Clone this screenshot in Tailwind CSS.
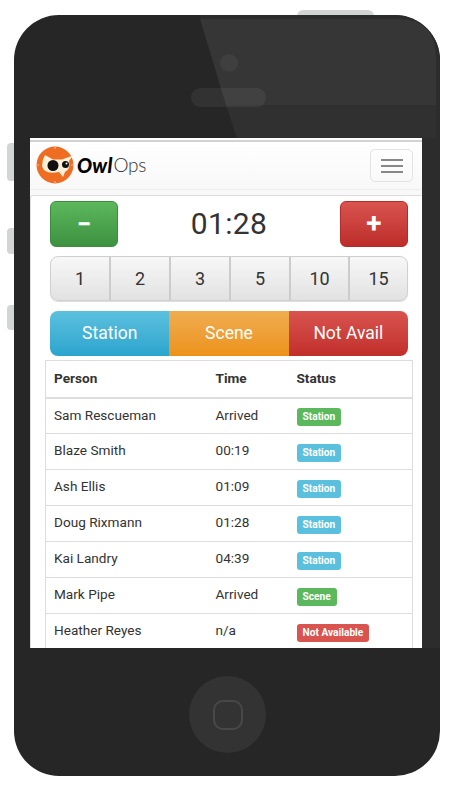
<!DOCTYPE html>
<html lang="en">
<head>
    <meta charset="UTF-8">
    <meta name="viewport" content="width=device-width, initial-scale=1.0">
    <title>OwlOps</title>
    <script src="https://cdn.jsdelivr.net/npm/@tailwindcss/browser@4"></script>
</head>
<body class="bg-white font-['Roboto',sans-serif] text-[#333]">
    <div class="relative w-[450px] h-[785px] overflow-hidden pt-[15px] pl-[14px]">
        <!-- hardware buttons -->
        <div class="absolute left-[297px] top-[10px] w-[77px] h-[6px] rounded-t-[6px] bg-[#d3d5d4]"></div>
        <div class="absolute left-[7px] top-[143px] w-[8px] h-[38px] rounded-l-[4px] bg-[#d3d5d4]"></div>
        <div class="absolute left-[7px] top-[228px] w-[8px] h-[26px] rounded-l-[4px] bg-[#d3d5d4]"></div>
        <div class="absolute left-[7px] top-[305px] w-[8px] h-[25px] rounded-l-[4px] bg-[#d3d5d4]"></div>

        <!-- phone body -->
        <div class="relative w-[426px] h-[761px] rounded-[45px] bg-[#262626] overflow-hidden pt-[123px] pl-[16px]">
            <svg class="absolute left-0 top-0" width="426" height="633" viewBox="0 0 426 633">
                <path d="M186 0H381Q426 0 426 45V633H408V123H223Z" fill="#2c2c2c"/>
                <path d="M186 4H385Q422 4 422 44V90H212Z" fill="#363636"/>
                <path d="M212 90H422V123H223Z" fill="#303030"/>
            </svg>
            <div class="absolute left-[206px] top-[39px] w-[18px] h-[18px] rounded-full bg-[#3f3f3f]"></div>
            <div class="absolute left-[177px] top-[73px] w-[75px] h-[19px] rounded-full bg-white/[0.06]"></div>

            <!-- screen -->
            <div class="relative w-[392px] h-[510px] bg-white overflow-hidden">
                <div class="pt-[2px]">
                    <nav class="h-[50px] border-t-2 border-[#d2d2d2] border-b border-b-[#eeeeee] bg-gradient-to-b from-white to-[#f8f8f8] flex items-center justify-between pl-[6px] pr-[9px]">
                        <div class="flex items-center">
                            <svg width="38" height="38" viewBox="0 0 38 38" class="mt-[-1px]">
                                <circle cx="19" cy="19" r="18.5" fill="#ee6d22"/>
                                <path d="M19 0v3M19 35v3M0 19h3M35 19h3" stroke="#f9b184" stroke-width="1.2"/>
                                <path d="M9 9L17 13.500H26L37 9.500L33 15Q35 23 29 26L27 31L23 26Q8 29 6 20Q6 14 9 9Z" fill="#fdf0d8"/>
                                <circle cx="17" cy="19.500" r="5.500" fill="#111"/>
                                <circle cx="29.500" cy="18.500" r="3.500" fill="#111"/>
                                <circle cx="30.500" cy="17.500" r="1" fill="#fff"/>
                            </svg>
                            <span class="ml-[3px] mt-[-2px] font-['Lato',sans-serif] font-black italic text-[20px] leading-none tracking-[0.2px] text-black">Owl</span>
                            <span class="ml-[1px] mt-[-2px] font-['Lato',sans-serif] font-light text-[19px] leading-none tracking-[-0.3px] text-[#333]">Ops</span>
                        </div>
                        <button class="w-[43px] h-[33px] rounded-[5px] border border-[#e3e3e3] flex flex-col items-center justify-center gap-[4px]">
                            <span class="block w-[22px] h-[2px] bg-[#888888]"></span>
                            <span class="block w-[22px] h-[2px] bg-[#888888]"></span>
                            <span class="block w-[22px] h-[2px] bg-[#888888]"></span>
                        </button>
                    </nav>
                </div>

                <div class="h-[5px] bg-[#f8f8f8]"></div>

                <main class="border-t border-l border-[#dddddd] rounded-tl-[3px] h-[453px] relative">
                    <div class="ml-[19px] mt-[5px] w-[358px] flex items-center justify-between">
                        <button class="w-[68px] h-[46px] rounded-[6px] border border-[#3d8b3d] bg-gradient-to-b from-[#5cb85c] to-[#3d9140] text-white text-[26px] font-bold leading-none">−</button>
                        <div class="text-[30px] leading-none tracking-[0.4px]">01:28</div>
                        <button class="w-[68px] h-[46px] rounded-[6px] border border-[#b52b27] bg-gradient-to-b from-[#d9534f] to-[#bd2c29] text-white text-[28px] font-bold leading-none">+</button>
                    </div>

                    <div class="ml-[19px] mt-[9px] w-[358px] h-[45px] grid grid-cols-[58px_60px_60px_60px_59px_1fr] rounded-[8px] border border-[#d0d0d0] bg-gradient-to-b from-[#f7f7f7] to-[#e2e2e2] text-[18px] text-[#333] shadow-[0_1px_1px_#ddd]">
                        <div class="flex items-center justify-center">1</div>
                        <div class="flex items-center justify-center border-l-2 border-[#cccccc]">2</div>
                        <div class="flex items-center justify-center border-l-2 border-[#cccccc]">3</div>
                        <div class="flex items-center justify-center border-l-2 border-[#cccccc]">5</div>
                        <div class="flex items-center justify-center border-l-2 border-[#cccccc]">10</div>
                        <div class="flex items-center justify-center border-l-2 border-[#cccccc]">15</div>
                    </div>

                    <div class="ml-[19px] mt-[10px] w-[358px] h-[45px] grid grid-cols-3 rounded-[8px] overflow-hidden text-[17.5px] text-white">
                        <div class="flex items-center justify-center pb-[1px] bg-gradient-to-b from-[#5bc0de] to-[#2aa5ce]">Station</div>
                        <div class="flex items-center justify-center pb-[1px] bg-gradient-to-b from-[#f0ad4e] to-[#ec9216]">Scene</div>
                        <div class="flex items-center justify-center pb-[1px] bg-gradient-to-b from-[#d9534f] to-[#c12e2a]">Not Avail</div>
                    </div>

                    <table class="ml-[14px] mt-[4px] w-[368px] table-fixed border border-[#dddddd] text-[13.6px] text-[#333]">
                        <thead>
                            <tr class="h-[37px] border-b-2 border-[#dddddd] text-left font-bold">
                                <th class="w-[162px] pl-[8px] pb-[2px]">Person</th>
                                <th class="w-[81px] pl-[8px] pb-[2px]">Time</th>
                                <th class="pl-[8px] pb-[2px]">Status</th>
                            </tr>
                        </thead>
                        <tbody>
                            <tr class="h-[36px] border-b border-[#dddddd]">
                                <td class="pl-[8px] pb-[2px]">Sam Rescueman</td>
                                <td class="pl-[8px] pb-[2px]">Arrived</td>
                                <td class="pl-[8px]"><span class="inline-block align-middle px-[6px] h-[18px] leading-[18px] rounded-[3px] bg-[#5cb85c] text-white text-[10.2px] font-bold">Station</span></td>
                            </tr>
                            <tr class="h-[36px] border-b border-[#dddddd]">
                                <td class="pl-[8px] pb-[2px]">Blaze Smith</td>
                                <td class="pl-[8px] pb-[2px]">00:19</td>
                                <td class="pl-[8px]"><span class="inline-block align-middle px-[6px] h-[18px] leading-[18px] rounded-[3px] bg-[#5bc0de] text-white text-[10.2px] font-bold">Station</span></td>
                            </tr>
                            <tr class="h-[36px] border-b border-[#dddddd]">
                                <td class="pl-[8px] pb-[2px]">Ash Ellis</td>
                                <td class="pl-[8px] pb-[2px]">01:09</td>
                                <td class="pl-[8px]"><span class="inline-block align-middle px-[6px] h-[18px] leading-[18px] rounded-[3px] bg-[#5bc0de] text-white text-[10.2px] font-bold">Station</span></td>
                            </tr>
                            <tr class="h-[36px] border-b border-[#dddddd]">
                                <td class="pl-[8px] pb-[2px]">Doug Rixmann</td>
                                <td class="pl-[8px] pb-[2px]">01:28</td>
                                <td class="pl-[8px]"><span class="inline-block align-middle px-[6px] h-[18px] leading-[18px] rounded-[3px] bg-[#5bc0de] text-white text-[10.2px] font-bold">Station</span></td>
                            </tr>
                            <tr class="h-[36px] border-b border-[#dddddd]">
                                <td class="pl-[8px] pb-[2px]">Kai Landry</td>
                                <td class="pl-[8px] pb-[2px]">04:39</td>
                                <td class="pl-[8px]"><span class="inline-block align-middle px-[6px] h-[18px] leading-[18px] rounded-[3px] bg-[#5bc0de] text-white text-[10.2px] font-bold">Station</span></td>
                            </tr>
                            <tr class="h-[36px] border-b border-[#dddddd]">
                                <td class="pl-[8px] pb-[2px]">Mark Pipe</td>
                                <td class="pl-[8px] pb-[2px]">Arrived</td>
                                <td class="pl-[8px]"><span class="inline-block align-middle px-[6px] h-[18px] leading-[18px] rounded-[3px] bg-[#5cb85c] text-white text-[10.2px] font-bold">Scene</span></td>
                            </tr>
                            <tr class="h-[36px] border-b border-[#dddddd]">
                                <td class="pl-[8px] pb-[2px]">Heather Reyes</td>
                                <td class="pl-[8px] pb-[2px]">n/a</td>
                                <td class="pl-[8px]"><span class="inline-block align-middle px-[6px] h-[18px] leading-[18px] rounded-[3px] bg-[#d9534f] text-white text-[10.2px] font-bold">Not Available</span></td>
                            </tr>
                        </tbody>
                    </table>
                </main>
            </div>

            <!-- home button -->
            <div class="absolute left-[175px] top-[661px] w-[77px] h-[77px] rounded-full bg-[#333333] flex items-center justify-center">
                <div class="w-[30px] h-[30px] rounded-[10px] border-2 border-[#484848]"></div>
            </div>
        </div>
    </div>
</body>
</html>
